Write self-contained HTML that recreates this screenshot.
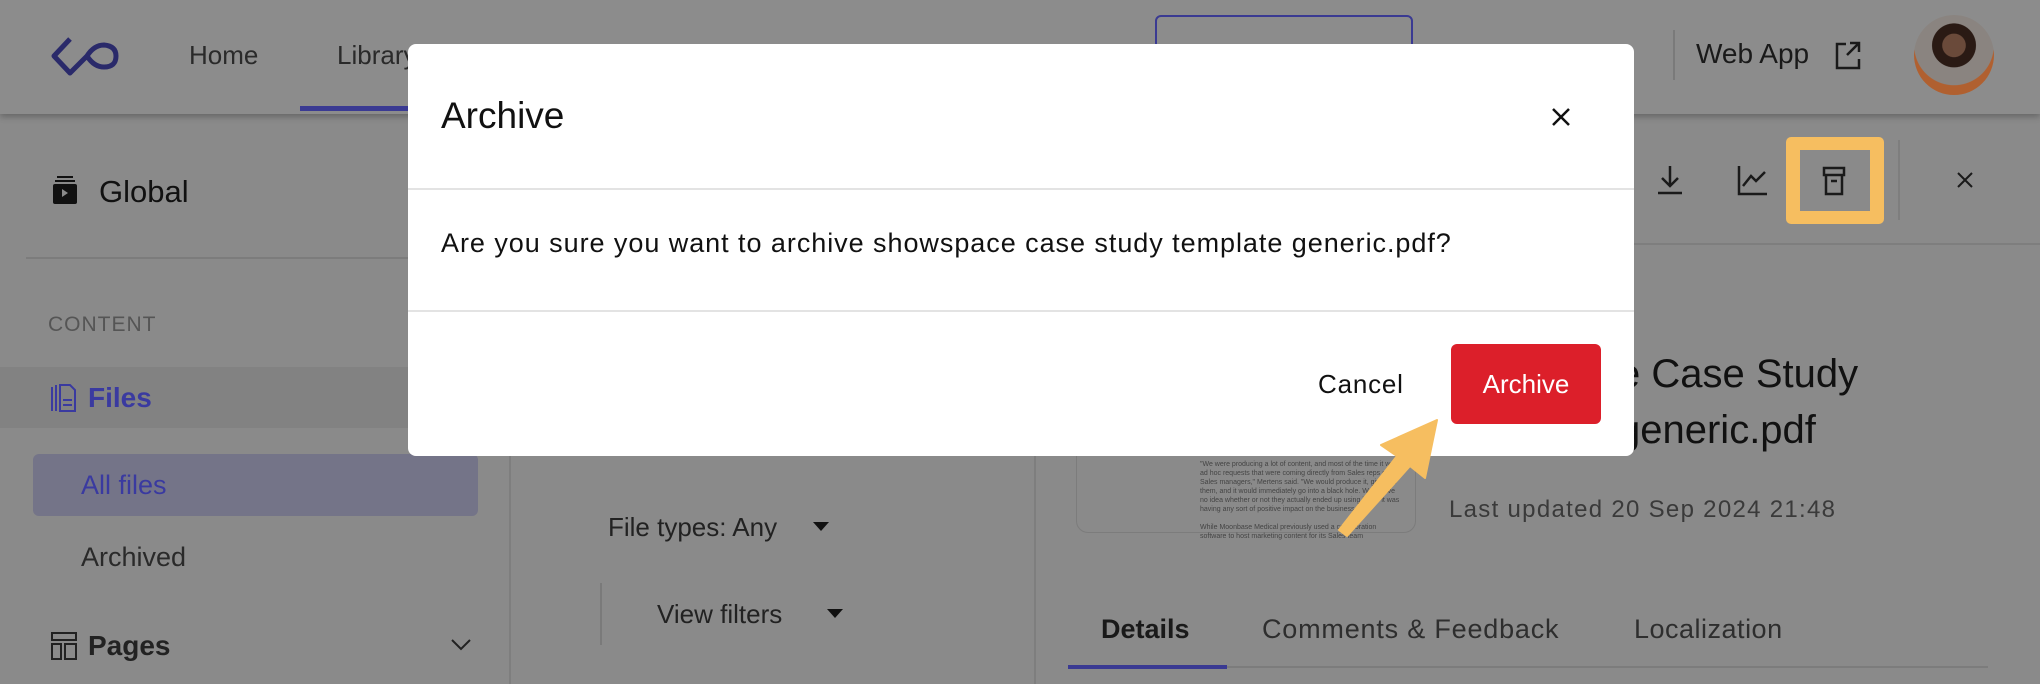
<!DOCTYPE html>
<html><head><meta charset="utf-8"><style>
*{margin:0;padding:0;box-sizing:border-box}
body{width:2040px;height:684px;overflow:hidden;background:#8a8a8a;font-family:"Liberation Sans",sans-serif;position:relative;color:#1a1a1a}
.a{position:absolute;white-space:nowrap}
</style></head><body>
<!-- top bar -->
<div class="a" style="left:0;top:0;width:2040px;height:114px;background:#8c8c8c;box-shadow:0 3px 6px rgba(0,0,0,.25)"></div>
<svg class="a" style="left:50px;top:36px" width="70" height="40" viewBox="0 0 70 40"><path d="M20 3 L4 20 L20 37 L37 20 Q44 9 54 9 Q66 10 66 20 Q66 31 54 31 Q44 31 37 20" fill="none" stroke="#2a2a6a" stroke-width="5" stroke-linejoin="round"/></svg>
<div class="a" style="left:189px;top:40px;font-size:26px;color:#2a2a2a">Home</div>
<div class="a" style="left:337px;top:40px;font-size:26px;color:#2a2a2a">Library</div>
<div class="a" style="left:300px;top:106px;width:110px;height:5px;background:#3a3a92"></div>
<div class="a" style="left:1155px;top:15px;width:258px;height:60px;border:2px solid #3a3a92;border-radius:6px"></div>
<div class="a" style="left:1673px;top:30px;width:2px;height:50px;background:#7a7a7a"></div>
<div class="a" style="left:1696px;top:38px;font-size:28px;color:#1a1a1a">Web App</div>
<svg class="a" style="left:1834px;top:40px" width="28" height="30" viewBox="0 0 28 30"><path d="M12 4H3v24h22v-9M16 3h9v9M25 3L13 15" fill="none" stroke="#1a1a1a" stroke-width="2.5"/></svg>
<div class="a" style="left:1914px;top:15px;width:80px;height:80px;border-radius:50%;background:radial-gradient(circle at 50% 38%,#6a4a3a 0 18%,#2a1a14 19% 34%,#8a8480 35% 62%,#b06030 63%)"></div>
<!-- sidebar -->
<div class="a" style="left:509px;top:114px;width:2px;height:570px;background:#7e7e7e"></div>
<svg class="a" style="left:53px;top:176px" width="24" height="28" viewBox="0 0 24 28"><rect x="4" y="0" width="16" height="2" fill="#111"/><rect x="2" y="4" width="20" height="2" fill="#111"/><rect x="0" y="8" width="24" height="20" rx="2" fill="#111"/><path d="M9 13l6 4-6 4z" fill="#8a8a8a"/></svg>
<div class="a" style="left:99px;top:174px;font-size:31px;color:#111">Global</div>
<div class="a" style="left:26px;top:257px;width:484px;height:2px;background:#7c7c7c"></div>
<div class="a" style="left:48px;top:313px;font-size:21px;color:#555;letter-spacing:1px">CONTENT</div>
<div class="a" style="left:0;top:367px;width:509px;height:61px;background:#828282"></div>
<svg class="a" style="left:50px;top:383px" width="26" height="30" viewBox="0 0 26 30"><path d="M2 4v24M6 2v26M10 2h10l5 5v21H10zM13 17h9M13 22h9" fill="none" stroke="#3a3aa0" stroke-width="2"/></svg>
<div class="a" style="left:88px;top:382px;font-size:28px;font-weight:bold;color:#3a3aa0">Files</div>
<div class="a" style="left:33px;top:454px;width:445px;height:62px;background:#747488;border-radius:6px"></div>
<div class="a" style="left:81px;top:470px;font-size:27px;color:#3a3aa0">All files</div>
<div class="a" style="left:81px;top:542px;font-size:27px;color:#2a2a2a">Archived</div>
<svg class="a" style="left:51px;top:632px" width="26" height="28" viewBox="0 0 26 28"><path d="M1 1h24v7H1zM1 12h9v15H1zM14 12h11v15H14z" fill="none" stroke="#222" stroke-width="2"/></svg>
<div class="a" style="left:88px;top:630px;font-size:28px;font-weight:bold;color:#222">Pages</div>
<svg class="a" style="left:450px;top:638px" width="22" height="14" viewBox="0 0 22 14"><path d="M2 2l9 9 9-9" fill="none" stroke="#222" stroke-width="2"/></svg>
<!-- middle -->
<div class="a" style="left:1034px;top:114px;width:2px;height:570px;background:#7e7e7e"></div>
<div class="a" style="left:608px;top:512px;font-size:26px;color:#222">File types: Any</div>
<div class="a" style="left:813px;top:522px;width:0;height:0;border-left:8px solid transparent;border-right:8px solid transparent;border-top:9px solid #111"></div>
<div class="a" style="left:600px;top:583px;width:2px;height:62px;background:#7a7a7a"></div>
<div class="a" style="left:657px;top:599px;font-size:26px;color:#222">View filters</div>
<div class="a" style="left:827px;top:609px;width:0;height:0;border-left:8px solid transparent;border-right:8px solid transparent;border-top:9px solid #111"></div>
<!-- right panel -->
<div class="a" style="left:1634px;top:243px;width:406px;height:2px;background:#7e7e7e"></div>
<svg class="a" style="left:1656px;top:164px" width="28" height="32" viewBox="0 0 28 32"><path d="M14 2v20M6 14l8 8 8-8M2 29h24" fill="none" stroke="#1a1a1a" stroke-width="2.5"/></svg>
<svg class="a" style="left:1737px;top:164px" width="32" height="32" viewBox="0 0 32 32"><path d="M2 2v28h28M6 22l8-10 5 5 9-9" fill="none" stroke="#1a1a1a" stroke-width="2.5"/></svg>
<div class="a" style="left:1786px;top:137px;width:98px;height:87px;background:#f6be60;border-radius:5px"></div>
<div class="a" style="left:1800px;top:150px;width:70px;height:61px;background:#8a8a8a"></div>
<svg class="a" style="left:1822px;top:166px" width="24" height="30" viewBox="0 0 24 30"><path d="M2 2h20v7H2zM4 9v19h16V9M9 15h6" fill="none" stroke="#1a1a1a" stroke-width="2.5"/></svg>
<div class="a" style="left:1898px;top:140px;width:2px;height:80px;background:#7e7e7e"></div>
<svg class="a" style="left:1956px;top:171px" width="18" height="18" viewBox="0 0 18 18"><path d="M2 2l14 14M16 2L2 16" stroke="#1a1a1a" stroke-width="2"/></svg>
<div class="a" style="left:1076px;top:380px;width:340px;height:153px;border:1px solid #7c7c7c;border-radius:12px"></div>
<div class="a" style="left:1200px;top:460px;width:200px;font-size:7px;line-height:9px;color:#444;white-space:normal">"We were producing a lot of content, and most of the time it was ad hoc requests that were coming directly from Sales reps or Sales managers," Mertens said. "We would produce it, give it to them, and it would immediately go into a black hole. We'd have no idea whether or not they actually ended up using it or if it was having any sort of positive impact on the business."<br><br>While Moonbase Medical previously used a collaboration software to host marketing content for its Sales team</div>
<div class="a" style="left:1618px;top:352px;font-size:40px;color:#111">e Case Study</div>
<div class="a" style="left:1618px;top:408px;font-size:40px;color:#111">generic.pdf</div>
<div class="a" style="left:1449px;top:496px;font-size:24px;color:#3a3a3a;letter-spacing:1.3px">Last updated 20 Sep 2024 21:48</div>
<div class="a" style="left:1101px;top:614px;font-size:27px;font-weight:bold;color:#1a1a1a">Details</div>
<div class="a" style="left:1262px;top:614px;font-size:27px;color:#2e2e2e;letter-spacing:.8px">Comments &amp; Feedback</div>
<div class="a" style="left:1634px;top:614px;font-size:27px;color:#2e2e2e;letter-spacing:.5px">Localization</div>
<div class="a" style="left:1068px;top:666px;width:920px;height:2px;background:#7c7c7c"></div>
<div class="a" style="left:1068px;top:665px;width:159px;height:4px;background:#3a3a92"></div>
<!-- modal -->
<div class="a" style="left:408px;top:44px;width:1226px;height:412px;background:#fff;border-radius:8px"></div>
<div class="a" style="left:441px;top:95px;font-size:37px;color:#111">Archive</div>
<svg class="a" style="left:1551px;top:107px" width="20" height="20" viewBox="0 0 20 20"><path d="M2 2l16 16M18 2L2 18" stroke="#111" stroke-width="2.5"/></svg>
<div class="a" style="left:408px;top:188px;width:1226px;height:2px;background:#e3e3e3"></div>
<div class="a" style="left:441px;top:228px;font-size:27px;color:#111;letter-spacing:.95px">Are you sure you want to archive showspace case study template generic.pdf?</div>
<div class="a" style="left:408px;top:310px;width:1226px;height:2px;background:#e3e3e3"></div>
<div class="a" style="left:1318px;top:369px;font-size:26px;color:#111;letter-spacing:.8px">Cancel</div>
<div class="a" style="left:1451px;top:344px;width:150px;height:80px;background:#dc1f2a;border-radius:6px;color:#fff;font-size:26px;text-align:center;line-height:80px">Archive</div>
<!-- arrow -->
<svg class="a" style="left:0;top:0" width="2040" height="684" viewBox="0 0 2040 684"><path d="M1437 420 L1425 478 L1410 466 L1347 536 L1339 530 L1397 456 L1381 445 Z" fill="#f6be60" stroke="#f6be60" stroke-width="2" stroke-linejoin="round"/></svg>
</body></html>
